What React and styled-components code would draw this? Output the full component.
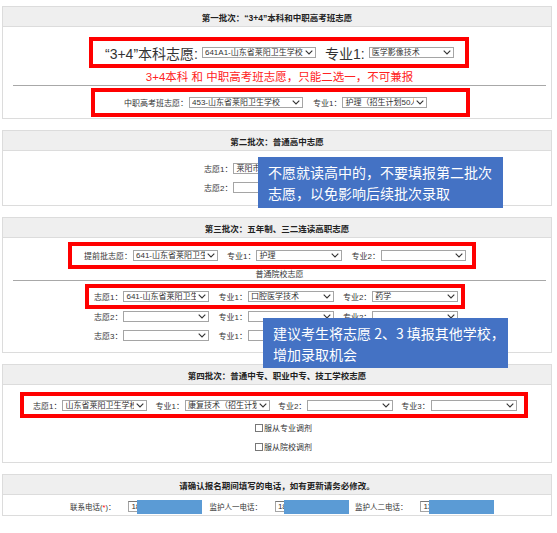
import styled, { createGlobalStyle } from "styled-components"

const GlobalStyle = createGlobalStyle`
  body {
    margin: 0;
    background: #fff;
    font-family: "Liberation Sans", "Noto Sans CJK SC", sans-serif;
    color: #333;
  }
`

function Chevron() {
  return (
    <svg width="8" height="5" viewBox="0 0 8 5">
      <polyline points="0.7,0.7 4,4 7.3,0.7" fill="none" stroke="#333" strokeWidth="1.1" />
    </svg>
  )
}

function Select({ w, text = "" }) {
  return (
    <SelectBox $w={w}>
      <span>{text}</span>
      <Chevron />
    </SelectBox>
  )
}

function Field({ label, w, text, big, gap }) {
  return (
    <FieldWrap $gap={gap}>
      <Label $big={big}>{label}</Label>
      <Select w={w} text={text} />
    </FieldWrap>
  )
}

function Phone({ label, value, gap, mark }) {
  return (
    <FieldWrap $gap={gap}>
      <PhoneLabel>
        {label}
        {mark && (
          <>
            (<Star>*</Star>)
          </>
        )}
        ：
      </PhoneLabel>
      <PhoneInput>
        {value}
        <Redact />
      </PhoneInput>
    </FieldWrap>
  )
}

const school = "山东省莱阳卫生学校"

export default function App() {
  return (
    <Page>
      <GlobalStyle />

      <Panel>
        <Header>第一批次：“3+4”本科和中职高考班志愿</Header>
        <Body $pt={10} $pb={1}>
          <RedBox $w={380} $h={31} $ml={76} $pl={12}>
            <Field big label="“3+4”本科志愿:" w={114} text={"641A1-" + school} gap={0} />
            <Field big label="专业1:" w={85} text="医学影像技术" gap={9} />
          </RedBox>
          <Hint>3+4本科 和 中职高考班志愿，只能二选一，不可兼报</Hint>
          <Rule />
          <RedBox $w={379} $h={29} $ml={78} $mt={2} $pl={29}>
            <Field label="中职高考班志愿：" w={114} text={"453-" + school} gap={0} />
            <Field label="专业1：" w={85} text="护理（招生计划50人）" gap={10} />
          </RedBox>
        </Body>
      </Panel>

      <Panel>
        <Header>第二批次：普通高中志愿</Header>
        <Body $pt={11} $pb={11}>
          <Row $ml={191}>
            <Field label="志愿1：" w={110} text="莱阳市第一中学" gap={0} />
          </Row>
          <Row $ml={191} $mt={6}>
            <Field label="志愿2：" w={110} gap={0} />
          </Row>
        </Body>
        <Note $x={255} $y={26} $h={51}>
          不愿就读高中的，不要填报第二批次
          <br />
          志愿，以免影响后续批次录取
        </Note>
      </Panel>

      <Panel>
        <Header>第三批次：五年制、三二连读高职志愿</Header>
        <Body $pt={4} $pb={10}>
          <RedBox $w={408} $h={27} $ml={55} $pl={12}>
            <Field label="提前批志愿：" w={85} text={"641-" + school} gap={0} />
            <Field label="专业1：" w={86} text="护理" />
            <Field label="专业2：" w={85} />
          </RedBox>
          <Caption>普通院校志愿</Caption>
          <Rule />
          <RedBox $w={380} $h={25} $ml={72} $mt={3} $pl={5}>
            <Field label="志愿1：" w={86} text={"641-" + school} gap={0} />
            <Field label="专业1：" w={86} text="口腔医学技术" />
            <Field label="专业2：" w={86} text="药学" />
          </RedBox>
          <Row $ml={81} $mt={1}>
            <Field label="志愿2：" w={86} gap={0} />
            <Field label="专业1：" w={86} />
            <Field label="专业2：" w={86} />
          </Row>
          <Row $ml={81} $mt={6}>
            <Field label="志愿3：" w={86} gap={0} />
            <Field label="专业1：" w={86} />
            <Field label="专业2：" w={86} />
          </Row>
        </Body>
        <Note $x={260} $y={100} $h={50}>
          建议考生将志愿 2、3 填报其他学校，
          <br />
          增加录取机会
        </Note>
      </Panel>

      <Panel>
        <Header>第四批次：普通中专、职业中专、技工学校志愿</Header>
        <Body $pt={7} $pb={9}>
          <RedBox $w={508} $h={26} $ml={7} $pl={9}>
            <Field label="志愿1：" w={85} text={school} gap={0} />
            <Field label="专业1：" w={85} text="康复技术（招生计划50人）" gap={8} />
            <Field label="专业2：" w={86} gap={8} />
            <Field label="专业3：" w={86} gap={8} />
          </RedBox>
          <Check $mt={3}>
            <Box />
            服从专业调剂
          </Check>
          <Check $mt={6}>
            <Box />
            服从院校调剂
          </Check>
        </Body>
      </Panel>

      <Panel>
        <Header>请确认报名期间填写的电话，如有更新请务必修改。</Header>
        <Body $pt={4} $pb={2}>
          <Row $ml={57} $h={14}>
            <Phone label="联系电话" mark value="18" gap={0} />
            <Phone label="监护人一电话" value="18" gap={7} />
            <Phone label="监护人二电话" value="13" gap={6} />
          </Row>
        </Body>
      </Panel>
    </Page>
  )
}

const Page = styled.div`
  display: flex;
  flex-direction: column;
  gap: 11px;
  width: 550px;
  padding: 6px 0 0 2px;
`

const Panel = styled.section`
  position: relative;
  border: 1px solid #dcdcdc;
  background: #fff;
`

const Header = styled.div`
  display: flex;
  align-items: center;
  justify-content: center;
  box-sizing: border-box;
  height: 20px;
  background: #efefef;
  border-bottom: 1px solid #dcdcdc;
  font-size: 8.5px;
  font-weight: bold;
  color: #222;
`

const Body = styled.div`
  display: flex;
  flex-direction: column;
  align-items: flex-start;
  padding: ${({ $pt }) => $pt}px 5px ${({ $pb }) => $pb}px 10px;
`

const RedBox = styled.div`
  display: flex;
  align-items: center;
  box-sizing: border-box;
  width: ${({ $w }) => $w}px;
  height: ${({ $h }) => $h}px;
  margin: ${({ $mt = 0 }) => $mt}px 0 0 ${({ $ml }) => $ml}px;
  padding-left: ${({ $pl }) => $pl}px;
  border: 4px solid #f00;
`

const Row = styled.div`
  display: flex;
  align-items: center;
  height: ${({ $h = 13 }) => $h}px;
  margin: ${({ $mt = 0 }) => $mt}px 0 0 ${({ $ml }) => $ml}px;
`

const FieldWrap = styled.div`
  display: flex;
  align-items: center;
  flex: none;
  margin-left: ${({ $gap = 9 }) => $gap}px;
`

const Label = styled.span`
  font-size: ${({ $big }) => ($big ? 14 : 8)}px;
  margin-right: ${({ $big }) => ($big ? 4 : 1)}px;
  color: #333;
  white-space: nowrap;
`

const SelectBox = styled.div`
  display: flex;
  align-items: center;
  gap: 2px;
  flex: none;
  box-sizing: border-box;
  width: ${({ $w }) => $w}px;
  height: 11px;
  padding: 0 2px;
  border: 1px solid #a5a5a5;
  background: #fff;
  font-size: 8px;
  color: #333;

  span {
    flex: 1;
    min-width: 0;
    overflow: hidden;
    white-space: nowrap;
    line-height: 9px;
  }
  svg {
    flex: none;
  }
`

const Hint = styled.div`
  align-self: center;
  margin-top: 2px;
  font-size: 11.5px;
  line-height: 15px;
  color: #f22;
`

const Caption = styled.div`
  align-self: center;
  font-size: 8px;
  line-height: 11px;
  color: #333;
`

const Rule = styled.div`
  align-self: stretch;
  height: 1px;
  background: #a8a8a8;
`

const Note = styled.div`
  position: absolute;
  left: ${({ $x }) => $x}px;
  top: ${({ $y }) => $y}px;
  z-index: 3;
  box-sizing: border-box;
  width: 245px;
  height: ${({ $h }) => $h}px;
  padding: 5px 0 0 10px;
  background: #4472c4;
  color: #fff;
  font-family: "Noto Sans CJK SC", sans-serif;
  font-size: 14px;
  line-height: 21px;
`

const Check = styled.label`
  display: flex;
  align-items: center;
  height: 13px;
  margin: ${({ $mt }) => $mt}px 0 0 242px;
  font-size: 8px;
  color: #333;
`

const Box = styled.span`
  box-sizing: border-box;
  width: 8px;
  height: 8px;
  margin-right: 1px;
  border: 1px solid #777;
  background: #fff;
`

const Star = styled.span`
  color: #f00;
`

const PhoneLabel = styled.span`
  margin-right: 13px;
  font-size: 7.5px;
  color: #333;
  white-space: nowrap;
`

const PhoneInput = styled.div`
  position: relative;
  box-sizing: border-box;
  width: 74px;
  height: 11px;
  padding-left: 2px;
  border: 1px solid #a5a5a5;
  border-top-color: #777;
  font-size: 8px;
  line-height: 9px;
  color: #333;
  white-space: nowrap;
`

const Redact = styled.span`
  position: absolute;
  left: 8px;
  top: -2px;
  width: 65px;
  height: 14px;
  background: #5b9bd5;
`
